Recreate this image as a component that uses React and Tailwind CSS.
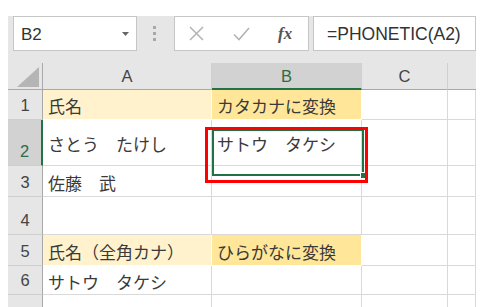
import React from 'react';

const jp = { fontFamily: '"Noto Sans CJK JP", "Noto Sans", sans-serif' };
const lat = { fontFamily: '"Liberation Sans", Arial, sans-serif' };

const rows = [
  { n: 1, a: '氏名', b: 'カタカナに変換', aFill: 'bg-[#fff2cc]', bFill: 'bg-[#ffe699]' },
  { n: 2, a: 'さとう　たけし', b: 'サトウ　タケシ', sel: true },
  { n: 3, a: '佐藤　武', b: '' },
  { n: 4, a: '', b: '' },
  { n: 5, a: '氏名（全角カナ）', b: 'ひらがなに変換', aFill: 'bg-[#fff2cc]', bFill: 'bg-[#ffe699]' },
  { n: 6, a: 'サトウ　タケシ', b: '' },
  { n: 7, a: '', b: '', hidden: true },
];

function RowHead({ n, sel, hidden }) {
  return (
    <div
      className={`flex items-end justify-center pb-[6px] border-b border-[#cfcfcf] text-[16.5px] leading-none ${
        sel ? 'bg-[#d2d2d2] text-[#2f6b45] border-r-2 border-r-[#217346]' : 'bg-[#e6e6e6] text-[#444] border-r border-r-[#a8a8a8]'
      }`}
      style={lat}
    >
      {hidden ? '' : n}
    </div>
  );
}

function Cell({ text, fill }) {
  return (
    <div
      className={`flex items-center pl-[5px] pt-[3px] text-[17px] text-[#3a3a3a] whitespace-nowrap overflow-hidden border-r border-b ${
        fill ? `${fill} border-white` : 'bg-white border-[#d9d9d9]'
      }`}
      style={jp}
    >
      {text}
    </div>
  );
}

export default function App() {
  return (
    <div className="w-[487px] h-[307px] bg-white overflow-hidden pl-[8px] pt-[7px]">
      <div className="relative w-[468px] h-[300px] bg-[#e6e6e6]">
        {/* formula bar */}
        <div className="flex items-center h-[35px] mt-[9px] pl-[5px]">
          <div className="flex items-center justify-between w-[124px] h-[35px] bg-white border border-[#c6c6c6] pl-[7px] pr-[7px]">
            <span className="text-[17px] text-[#333] pt-[2px]" style={lat}>B2</span>
            <svg width="7" height="4" viewBox="0 0 7 4"><path d="M0 0h7L3.5 4z" fill="#666" /></svg>
          </div>
          <div className="flex flex-col gap-[3px] ml-[16px] mr-[18px]">
            <span className="w-[3px] h-[3px] bg-[#a8a8a8]" />
            <span className="w-[3px] h-[3px] bg-[#a8a8a8]" />
            <span className="w-[3px] h-[3px] bg-[#a8a8a8]" />
          </div>
          <div className="flex items-center w-[135px] h-[35px] bg-white border border-[#c6c6c6] pl-[14px]">
            <svg width="15" height="15" viewBox="0 0 15 15">
              <path d="M1 1l13 13M14 1L1 14" stroke="#b3b3b3" strokeWidth="1.5" fill="none" />
            </svg>
            <svg className="ml-[29px]" width="17" height="14" viewBox="0 0 17 14">
              <path d="M1 7.5l5 5L16 1" stroke="#b3b3b3" strokeWidth="1.6" fill="none" />
            </svg>
            <span className="ml-[28px] italic text-[17px] text-[#555] font-semibold" style={{ fontFamily: '"Liberation Serif", serif' }}>
              fx
            </span>
          </div>
          <div className="flex items-center w-[163px] h-[35px] ml-[4px] bg-white border border-[#c6c6c6] pl-[13px]">
            <span className="text-[17.5px] text-[#333] pt-[1px]" style={lat}>=PHONETIC(A2)</span>
          </div>
        </div>

        {/* sheet grid */}
        <div className="grid grid-cols-[35px_169px_150px_86px_28px] grid-rows-[27px_30px_46px_31px_38px_31px_29px_30px] mt-[12px]">
          <div className="flex items-end justify-end pr-[3px] pb-[2px] bg-[#e6e6e6] border-r border-b border-[#a8a8a8]">
            <svg width="22" height="20" viewBox="0 0 22 20"><path d="M22 0v20H0z" fill="#b5b5b5" /></svg>
          </div>
          <div className="flex items-center justify-center pt-[1px] text-[16.5px] text-[#444] bg-[#e6e6e6] border-r border-r-[#cfcfcf] border-b border-b-[#a8a8a8]" style={lat}>A</div>
          <div className="flex items-center justify-center pt-[1px] text-[16.5px] text-[#2f6b45] bg-[#d2d2d2] border-r border-r-[#cfcfcf] border-b-2 border-b-[#217346]" style={lat}>B</div>
          <div className="flex items-center justify-center pt-[1px] text-[16.5px] text-[#444] bg-[#e6e6e6] border-r border-r-[#cfcfcf] border-b border-b-[#a8a8a8]" style={lat}>C</div>
          <div className="bg-[#e6e6e6] border-b border-b-[#a8a8a8]" />

          {rows.map((r) => (
            <React.Fragment key={r.n}>
              <RowHead n={r.n} sel={r.sel} hidden={r.hidden} />
              <Cell text={r.a} fill={r.aFill} />
              <Cell text={r.b} fill={r.bFill} />
              <Cell text="" />
              <Cell text="" />
            </React.Fragment>
          ))}
        </div>

        {/* active cell border */}
        <div className="absolute left-[204px] top-[113px] w-[152px] h-[47px] border-2 border-[#217346] pointer-events-none">
          <span className="absolute right-[-5px] bottom-[-5px] w-[7px] h-[7px] bg-[#217346] border border-white" />
        </div>

        {/* red highlight */}
        <div className="absolute left-[197px] top-[111px] w-[163px] h-[56px] border-[3px] border-[#ff0000] pointer-events-none" />
      </div>
    </div>
  );
}
